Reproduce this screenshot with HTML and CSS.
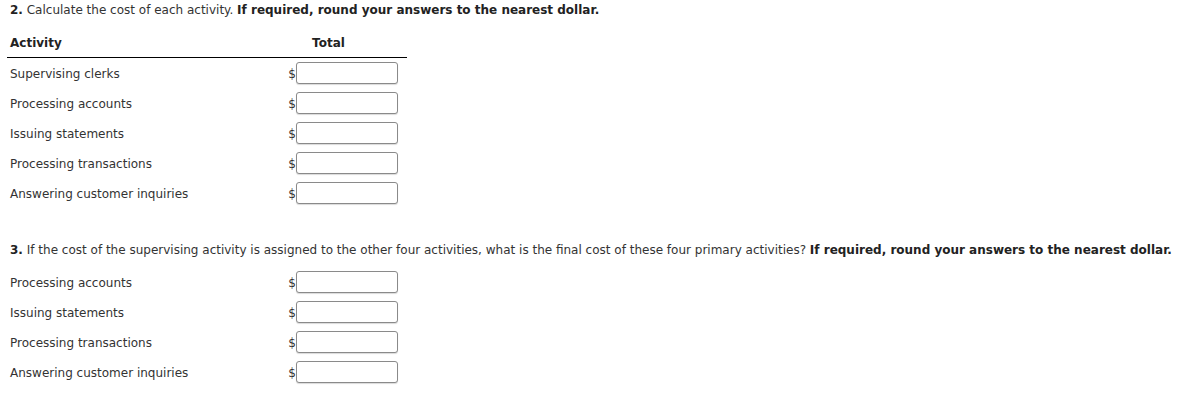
FILE: index.html
```html
<!DOCTYPE html>
<html>
<head>
<meta charset="utf-8">
<link rel="stylesheet" href="styles.css">
</head>
<body>
<div class="page">
  <p class="q first"><b>2.</b> Calculate the cost of each activity. <b>If required, round your answers to the nearest dollar.</b></p>
  <div class="table">
    <div class="head">
      <div class="h-label">Activity</div>
      <div class="h-total">Total</div>
    </div>
    <div class="row"><div class="label">Supervising clerks</div><div class="val"><span class="dollar">$</span><span class="box"></span></div></div>
    <div class="row"><div class="label">Processing accounts</div><div class="val"><span class="dollar">$</span><span class="box"></span></div></div>
    <div class="row"><div class="label">Issuing statements</div><div class="val"><span class="dollar">$</span><span class="box"></span></div></div>
    <div class="row"><div class="label">Processing transactions</div><div class="val"><span class="dollar">$</span><span class="box"></span></div></div>
    <div class="row"><div class="label">Answering customer inquiries</div><div class="val"><span class="dollar">$</span><span class="box"></span></div></div>
  </div>
  <p class="q second"><b>3.</b> If the cost of the supervising activity is assigned to the other four activities, what is the final cost of these four primary activities? <b>If required, round your answers to the nearest dollar.</b></p>
  <div class="table t2">
    <div class="row"><div class="label">Processing accounts</div><div class="val"><span class="dollar">$</span><span class="box"></span></div></div>
    <div class="row"><div class="label">Issuing statements</div><div class="val"><span class="dollar">$</span><span class="box"></span></div></div>
    <div class="row"><div class="label">Processing transactions</div><div class="val"><span class="dollar">$</span><span class="box"></span></div></div>
    <div class="row"><div class="label">Answering customer inquiries</div><div class="val"><span class="dollar">$</span><span class="box"></span></div></div>
  </div>
</div>
</body>
</html>
```
FILE: styles.css
```css
html, body {
  margin: 0;
  padding: 0;
  background: #fff;
}
body {
  font-family: Verdana, "DejaVu Sans", sans-serif;
  font-size: 12px;
  color: #333;
}
.page {
  padding: 0 7px;
}
.q {
  margin: 0;
  padding: 1px 0 0 3px;
  line-height: 18px;
  white-space: nowrap;
}
.q b {
  font-weight: bold;
  color: #222;
}
.second {
  margin-top: 32px;
}
.table {
  width: 400px;
  margin-top: 8px;
}
.head, .row {
  display: grid;
  grid-template-columns: 243px 157px;
  align-items: center;
}
.head {
  height: 30px;
  border-bottom: 1px solid #000;
  font-weight: bold;
  color: #222;
}
.h-label {
  padding: 2px 0 0 3px;
}
.h-total {
  padding-top: 2px;
  text-align: center;
}
.row {
  height: 30px;
}
.label {
  padding: 2px 0 0 3px;
}
.val {
  display: flex;
  align-items: center;
  justify-content: flex-end;
  padding-right: 9px;
}
.dollar {
  font-size: 12px;
  color: #333;
  padding-top: 2px;
}
.box {
  display: block;
  width: 100px;
  height: 20px;
  border: 1px solid #8a8a8a;
  border-radius: 3px;
  box-shadow: 0 1px 1px rgba(0,0,0,0.15);
  background: #fff;
}
```
